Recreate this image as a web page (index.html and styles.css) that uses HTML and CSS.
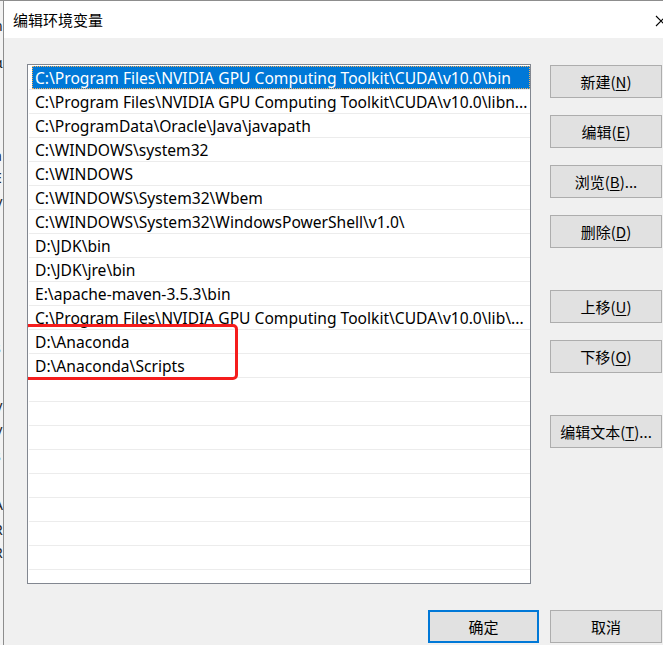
FILE: index.html
```html
<!DOCTYPE html>
<html lang="zh-CN">
<head>
<meta charset="utf-8">
<title>编辑环境变量</title>
<link rel="stylesheet" href="styles.css">
</head>
<body>
<div class="screen">
  <div class="behind">
    <span class="frag f1">n</span>
    <span class="frag f2">ɑ</span>
    <span class="frag f3">t</span>
    <span class="frag f4 blue">r</span>
    <span class="frag f5 blue">r</span>
    <span class="frag f6">a</span>
    <span class="frag f7">E</span>
    <span class="frag f8">V</span>
    <span class="frag f9">s</span>
    <span class="frag f10">V</span>
    <span class="frag f11">V</span>
    <span class="frag f12">s</span>
    <span class="frag f13">A</span>
    <span class="frag f14">R</span>
    <span class="frag f15">R</span>
  </div>
  <div class="dialog">
    <div class="titlebar">
      <span class="title">编辑环境变量</span>
      <svg class="close" width="12" height="12" viewBox="0 0 12 12"><path d="M1 1 L11 11 M11 1 L1 11" stroke="#000" stroke-width="1.1" fill="none"/></svg>
    </div>
    <div class="body">
      <div class="main">
        <div class="listbox">
          <div class="row selected"><span class="cell">C:\Program Files\NVIDIA GPU Computing Toolkit\CUDA\v10.0\bin</span></div>
          <div class="row"><span class="cell">C:\Program Files\NVIDIA GPU Computing Toolkit\CUDA\v10.0\libn...</span></div>
          <div class="row"><span class="cell">C:\ProgramData\Oracle\Java\javapath</span></div>
          <div class="row"><span class="cell">C:\WINDOWS\system32</span></div>
          <div class="row"><span class="cell">C:\WINDOWS</span></div>
          <div class="row"><span class="cell">C:\WINDOWS\System32\Wbem</span></div>
          <div class="row"><span class="cell">C:\WINDOWS\System32\WindowsPowerShell\v1.0\</span></div>
          <div class="row"><span class="cell">D:\JDK\bin</span></div>
          <div class="row"><span class="cell">D:\JDK\jre\bin</span></div>
          <div class="row"><span class="cell">E:\apache-maven-3.5.3\bin</span></div>
          <div class="row"><span class="cell">C:\Program Files\NVIDIA GPU Computing Toolkit\CUDA\v10.0\lib\...</span></div>
          <div class="row"><span class="cell">D:\Anaconda</span></div>
          <div class="row"><span class="cell">D:\Anaconda\Scripts</span></div>
          <div class="row"><span class="cell"></span></div>
          <div class="row"><span class="cell"></span></div>
          <div class="row"><span class="cell"></span></div>
          <div class="row"><span class="cell"></span></div>
          <div class="row"><span class="cell"></span></div>
          <div class="row"><span class="cell"></span></div>
          <div class="row"><span class="cell"></span></div>
          <div class="row"><span class="cell"></span></div>
          <div class="row"><span class="cell"></span></div>
          <div class="highlight"></div>
        </div>
        <div class="buttons">
          <button class="btn">新建(<u>N</u>)</button>
          <button class="btn">编辑(<u>E</u>)</button>
          <button class="btn">浏览(<u>B</u>)...</button>
          <button class="btn">删除(<u>D</u>)</button>
          <button class="btn gap">上移(<u>U</u>)</button>
          <button class="btn">下移(<u>O</u>)</button>
          <button class="btn gap">编辑文本(<u>T</u>)...</button>
        </div>
      </div>
      <div class="footer">
        <button class="btn default">确定</button>
        <button class="btn">取消</button>
      </div>
    </div>
  </div>
</div>
</body>
</html>
```

FILE: styles.css
```css
html, body {
  margin: 0;
  padding: 0;
}
body {
  width: 663px;
  height: 645px;
  overflow: hidden;
  background: #f0f0f0;
  font-family: "Noto Sans", "Noto Sans CJK SC", sans-serif;
  font-size: 15px;
  color: #000;
}
.screen {
  display: flex;
  width: 663px;
  height: 645px;
  border-top: 1px solid #8d8d8d;
  box-sizing: border-box;
}
.behind {
  position: relative;
  width: 3px;
  flex: none;
  background: #f3f3f3;
  overflow: hidden;
}
.frag {
  position: absolute;
  left: -6px;
  font-size: 14px;
  line-height: 14px;
  color: #222;
}
.frag.blue { color: #1f5aa8; }
.f1 { top: 18px; }
.f2 { top: 55px; }
.f3 { top: 78px; }
.f4 { top: 101px; }
.f5 { top: 125px; }
.f6 { top: 148px; }
.f7 { top: 170px; }
.f8 { top: 196px; }
.f9 { top: 340px; }
.f10 { top: 400px; }
.f11 { top: 424px; }
.f12 { top: 448px; }
.f13 { top: 497px; }
.f14 { top: 522px; }
.f15 { top: 545px; }
.dialog {
  flex: 1;
  display: flex;
  flex-direction: column;
  border-left: 1px solid #8d8d8d;
  background: #f0f0f0;
}
.titlebar {
  height: 37px;
  background: #fff;
  display: flex;
  align-items: center;
  justify-content: space-between;
  padding-left: 9px;
  flex: none;
}
.title {
  font-family: "Noto Sans CJK SC", sans-serif;
  font-size: 15px;
  color: #000;
  margin-top: 0;
}
.close {
  margin-right: -4px;
  margin-top: 2px;
}
.body {
  flex: 1;
  display: flex;
  flex-direction: column;
}
.main {
  display: flex;
  align-items: flex-start;
  padding-left: 23px;
  padding-top: 26px;
}
.listbox {
  position: relative;
  width: 504px;
  height: 520px;
  box-sizing: border-box;
  border: 1px solid #828790;
  background: #fff;
  padding: 1px 0 0 1px;
  overflow: hidden;
  font-size: 15.6px;
}
.row {
  height: 24px;
  box-sizing: border-box;
  border-bottom: 1px solid #ececec;
  width: 501px;
  padding-left: 3px;
}
.cell {
  display: block;
  height: 23px;
  line-height: 24px;
  padding-left: 3px;
  white-space: nowrap;
  overflow: hidden;
}
.selected .cell {
  background: #0078d7;
  color: #fff;
  outline: 1px dotted #f7b15a;
  outline-offset: -1px;
}
.highlight {
  position: absolute;
  left: -4px;
  top: 259px;
  width: 208px;
  height: 50px;
  border: 3px solid #f51d1d;
  border-radius: 5px;
}
.buttons {
  display: flex;
  flex-direction: column;
  margin-left: 19px;
  margin-top: 1px;
  gap: 17px;
}
.btn {
  width: 112px;
  height: 33px;
  box-sizing: border-box;
  background: #e1e1e1;
  border: 1px solid #adadad;
  border-radius: 0;
  font-family: "Noto Sans CJK SC", sans-serif;
  font-size: 15px;
  color: #000;
  padding: 0;
  margin: 0;
}
.btn u {
  text-underline-offset: 2px;
}
.btn.gap {
  margin-top: 25px;
}
.footer {
  display: flex;
  justify-content: flex-end;
  gap: 11px;
  margin-top: 26px;
  margin-right: 1px;
}
.btn.default {
  width: 111px;
  border: 2px solid #0078d7;
}
```
